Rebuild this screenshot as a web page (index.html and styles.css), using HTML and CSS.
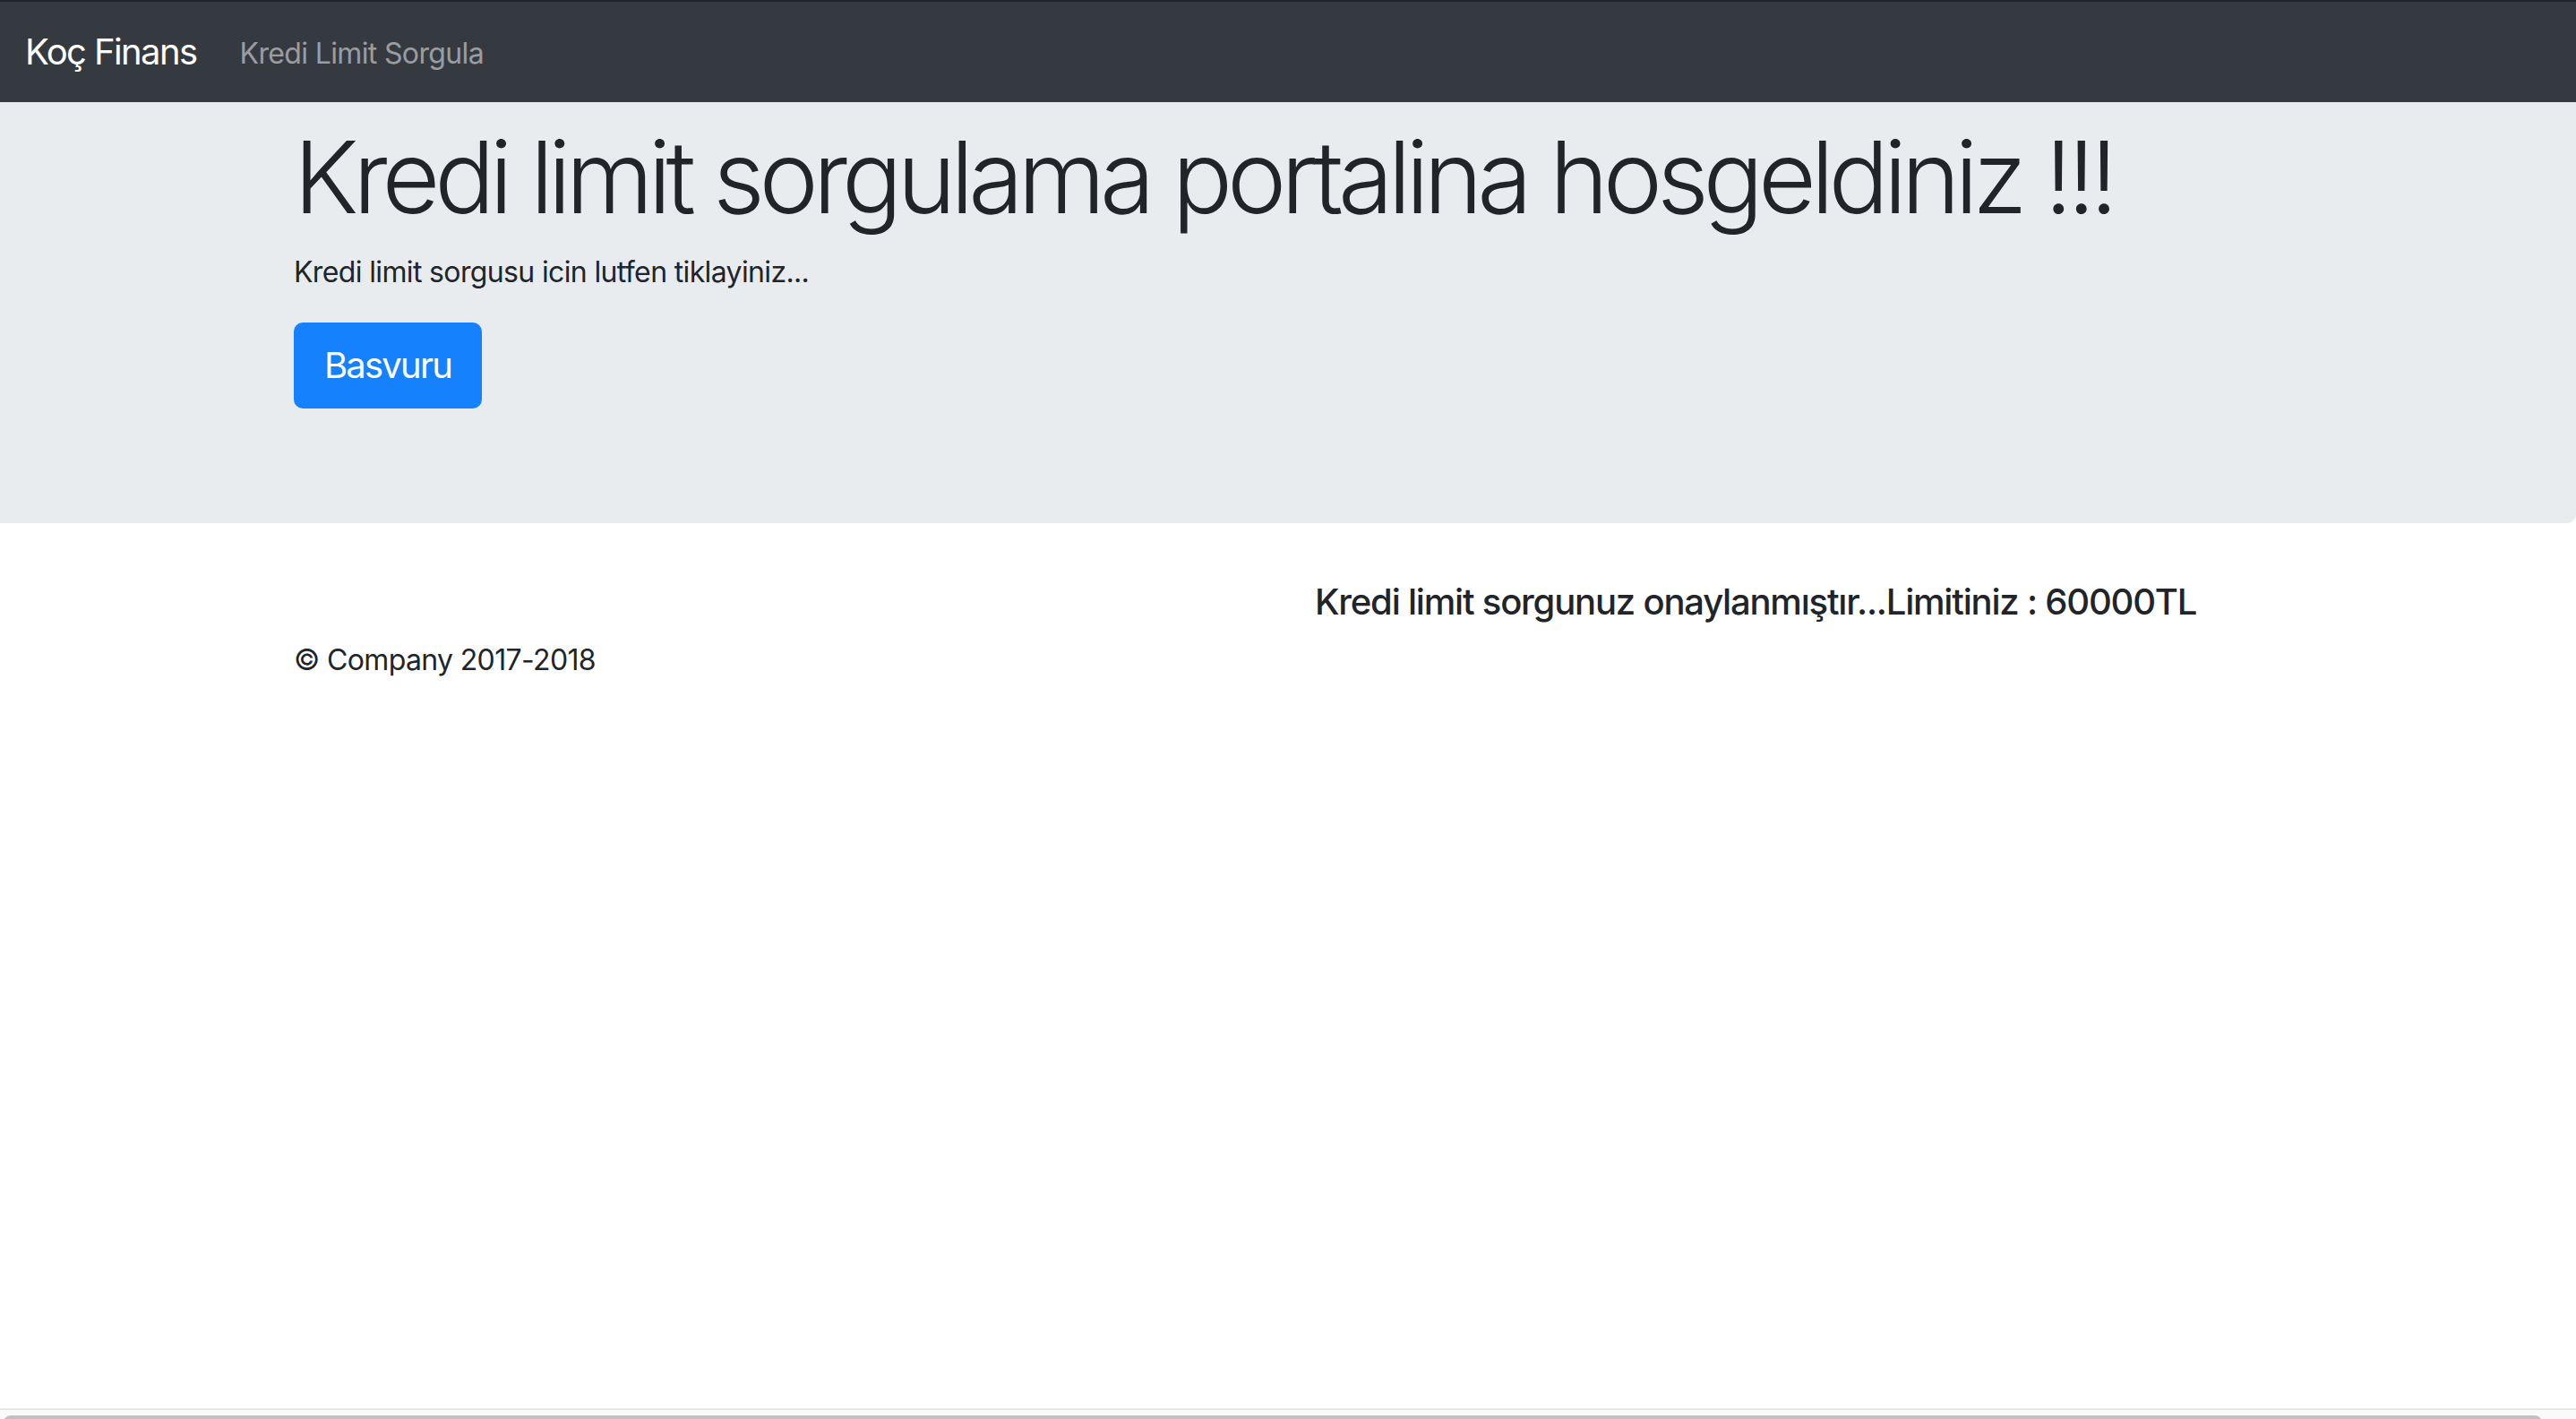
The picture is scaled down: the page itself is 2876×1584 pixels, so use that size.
FILE: index.html
```html
<!DOCTYPE html>
<html lang="tr">

<head>
    <meta charset="UTF-8">
    <meta name="viewport" content="width=device-width, initial-scale=1.0">
    <title>Koç Finans</title>
    <link rel="stylesheet" href="styles.css">
</head>

<body>
    <nav class="navbar">
        <a href="#" class="navbar-brand">Koç Finans</a>
        <a href="#" class="nav-link">Kredi Limit Sorgula</a>
    </nav>

    <main class="page">
        <div class="jumbotron">
            <div class="container">
                <h1 class="display-title">Kredi limit sorgulama portalina hosgeldiniz !!!</h1>
                <p class="intro">Kredi limit sorgusu icin lutfen tiklayiniz...</p>
                <a href="#" class="btn-primary">Basvuru</a>
            </div>
        </div>

        <div class="container">
            <div class="row">
                <div class="col"></div>
                <div class="col">
                    <h5 class="result">Kredi limit sorgunuz onaylanmıştır...Limitiniz : 60000TL</h5>
                </div>
            </div>

            <footer class="footer">
                <p>&copy; Company 2017-2018</p>
            </footer>
        </div>
    </main>

    <div class="scrollbar">
        <div class="scrollbar-thumb"></div>
    </div>
</body>

</html>
```

FILE: styles.css
```css
* {
    box-sizing: border-box;
    margin: 0;
    padding: 0;
}

body {
    font-family: Inter, 'Noto Sans', 'Liberation Sans', sans-serif;
    color: #212529;
    background-color: #fff;
    min-height: 1584px;
    display: flex;
    flex-direction: column;
}

a {
    text-decoration: none;
}

.navbar {
    display: flex;
    align-items: center;
    height: 114px;
    padding: 0 28px;
    background-color: #353a41;
    border-top: 2px solid #20252b;
}

.navbar-brand {
    font-size: 40px;
    line-height: 60px;
    letter-spacing: -0.04em;
    color: #fff;
    margin-right: 32px;
}

.nav-link {
    font-size: 32px;
    line-height: 48px;
    letter-spacing: -0.02em;
    padding: 3px 16px 0;
    color: rgba(255, 255, 255, 0.5);
}

.page {
    flex: 1;
}

.jumbotron {
    background-color: #e8ecef;
    padding: 16px 0 128px;
    margin-bottom: 64px;
    border-bottom-right-radius: 10px;
}

.container {
    max-width: 2280px;
    margin: 0 auto;
    padding: 0 30px;
}

.display-title {
    font-size: 112px;
    font-weight: 300;
    line-height: 1.2;
    letter-spacing: -0.055em;
    white-space: nowrap;
    margin-bottom: 16px;
}

.intro {
    font-size: 32px;
    line-height: 48px;
    letter-spacing: -0.02em;
    margin-bottom: 32px;
}

.btn-primary {
    display: inline-block;
    font-size: 40px;
    line-height: 60px;
    letter-spacing: -0.045em;
    padding: 16px 32px;
    color: #fff;
    background-color: #1681fd;
    border: 2px solid #1681fd;
    border-radius: 10px;
}

.row {
    display: grid;
    grid-template-columns: 1fr 1fr;
    column-gap: 60px;
}

.result {
    font-size: 40px;
    font-weight: 500;
    line-height: 1.2;
    letter-spacing: -0.03em;
}

.footer {
    margin-top: 17px;
    font-size: 32px;
    line-height: 48px;
    letter-spacing: -0.02em;
}

.scrollbar {
    height: 12px;
    overflow: hidden;
    background-color: #fafafa;
    border-top: 2px solid #e8e8e8;
    padding: 6px 38px 0 4px;
}

.scrollbar-thumb {
    height: 16px;
    background-color: #c1c1c1;
    border-radius: 8px;
}
```
